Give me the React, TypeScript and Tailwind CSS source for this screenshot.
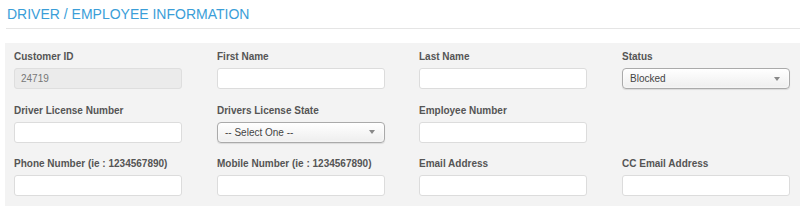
import React from "react";

const ROWS = [
  [
    { label: "Customer ID", kind: "disabled", value: "24719" },
    { label: "First Name", kind: "text" },
    { label: "Last Name", kind: "text" },
    { label: "Status", kind: "select", value: "Blocked" },
  ],
  [
    { label: "Driver License Number", kind: "text" },
    { label: "Drivers License State", kind: "select", value: "-- Select One --" },
    { label: "Employee Number", kind: "text" },
    null,
  ],
  [
    { label: "Phone Number (ie : 1234567890)", kind: "text" },
    { label: "Mobile Number (ie : 1234567890)", kind: "text" },
    { label: "Email Address", kind: "text" },
    { label: "CC Email Address", kind: "text" },
  ],
];

type Field = { label: string; kind: string; value?: string } | null;

function Control({ f }: { f: NonNullable<Field> }) {
  if (f.kind === "disabled") {
    return (
      <div className="flex h-[21px] w-[168px] items-center rounded-[3px] border border-[#dedede] bg-[#ebebeb] px-[6px] text-[10px] text-[#777]">
        {f.value}
      </div>
    );
  }
  if (f.kind === "select") {
    return (
      <div className="flex h-[21px] w-[168px] items-center justify-between rounded-[4px] border border-[#aaa] bg-gradient-to-b from-white to-[#eee] pl-[7px] pr-[9px] text-[10px] text-[#444] shadow-[inset_0_0_3px_white,0_1px_1px_rgba(0,0,0,0.1)]">
        <span>{f.value}</span>
        <svg width="6" height="4" viewBox="0 0 6 4">
          <path d="M0 0h6L3 4z" fill="#888" />
        </svg>
      </div>
    );
  }
  return (
    <div className="h-[21px] w-[168px] rounded-[3px] border border-[#dcdcdc] bg-white" />
  );
}

export default function App() {
  return (
    <div className="h-[206px] w-[800px] overflow-hidden bg-white font-['Liberation_Sans',Arial,sans-serif]">
      <div className="px-[7px] pt-[5px] text-[14px] leading-[18px] text-[#3b9ed8]">
        DRIVER / EMPLOYEE INFORMATION
      </div>
      <div className="ml-[6px] mt-[5px] border-t border-[#e5e5e5]" />
      <div className="ml-[5px] mt-[14px] h-[170px] bg-[#f3f3f3] pl-[9px] pt-[8px]">
        {ROWS.map((row, i) => (
          <div key={i} className="mb-[15.5px] grid grid-cols-[203px_202px_203px_168px]">
            {row.map((f, j) =>
              f ? (
                <div key={j} className="flex flex-col">
                  <div className="mb-[5px] h-[12px] text-[10px] font-bold leading-[12px] text-[#555]">
                    {f.label}
                  </div>
                  <Control f={f} />
                </div>
              ) : (
                <div key={j} />
              )
            )}
          </div>
        ))}
      </div>
    </div>
  );
}
